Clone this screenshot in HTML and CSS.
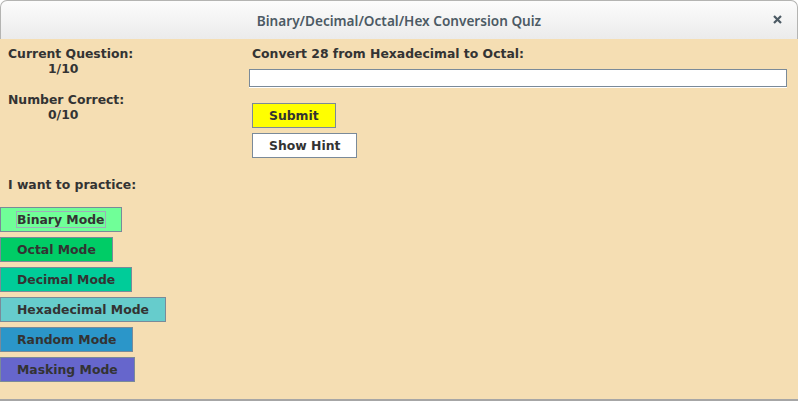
FILE: index.html
```html
<!DOCTYPE html>
<html>
<head>
<meta charset="utf-8">
<link rel="stylesheet" href="styles.css">
</head>
<body>
<div class="window">
  <div class="titlebar">
    <span class="title">Binary/Decimal/Octal/Hex Conversion Quiz</span>
    <svg class="close" width="9" height="9" viewBox="0 0 9 9"><path d="M1 1 L8 8 M8 1 L1 8" stroke="#4c5a64" stroke-width="2.2" stroke-linecap="butt"/></svg>
  </div>
  <div class="content">
    <div class="left">
      <div class="label">Current Question:</div>
      <div class="value">1/10</div>
      <div class="label gap-sm">Number Correct:</div>
      <div class="value">0/10</div>
      <div class="label gap-lg">I want to practice:</div>
      <div class="modes">
        <button class="mode binary"><span class="focus">Binary Mode</span></button>
        <button class="mode octal">Octal Mode</button>
        <button class="mode decimal">Decimal Mode</button>
        <button class="mode hex">Hexadecimal Mode</button>
        <button class="mode random">Random Mode</button>
        <button class="mode masking">Masking Mode</button>
      </div>
    </div>
    <div class="right">
      <div class="label prompt">Convert 28 from Hexadecimal to Octal:</div>
      <div class="field"></div>
      <div class="actions">
        <button class="btn submit">Submit</button>
        <button class="btn hint">Show Hint</button>
      </div>
    </div>
  </div>
  <div class="bottom"></div>
</div>
</body>
</html>
```
FILE: styles.css
```css
* { box-sizing: border-box; }
html, body { margin: 0; padding: 0; background: #ffffff; }
body {
  font-family: "DejaVu Sans", sans-serif;
  width: 798px;
  height: 401px;
  overflow: hidden;
}
.window {
  width: 798px;
  height: 401px;
  display: flex;
  flex-direction: column;
}
.titlebar {
  height: 39px;
  flex: none;
  position: relative;
  display: flex;
  align-items: center;
  justify-content: center;
  border: 1px solid #b4b4b2;
  border-bottom: none;
  border-radius: 7px 7px 0 0;
  background: linear-gradient(#fcfcfc, #ebebeb);
}
.title {
  font-family: "Noto Sans", "DejaVu Sans", sans-serif;
  font-weight: 600;
  font-size: 13.6px;
  color: #4c5a64;
  margin-top: 1px;
}
.close {
  position: absolute;
  right: 15px;
  top: 14px;
}
.content {
  flex: 1;
  background: #f5deb3;
  display: flex;
}
.left {
  width: 249px;
  flex: none;
  padding-top: 7px;
}
.label, .value {
  font-weight: bold;
  font-size: 12.4px;
  line-height: 15px;
  color: #333333;
  white-space: nowrap;
}
.label { padding-left: 8px; }
.value { padding-left: 48px; }
.gap-sm { margin-top: 16px; }
.gap-lg { margin-top: 55px; }
.modes {
  margin-top: 15px;
  display: flex;
  flex-direction: column;
  align-items: flex-start;
  gap: 5px;
}
button {
  font-family: "DejaVu Sans", sans-serif;
  font-weight: bold;
  font-size: 12.4px;
  color: #333333;
  height: 25px;
  border: 1px solid #7a8a99;
  margin: 0;
  padding: 0 16px;
  line-height: 15px;
  border-radius: 0;
}
.focus {
  outline: 1px solid #9fadb9;
  outline-offset: 0px;
  padding: 0;
}
.binary { background: #70ff98; }
.octal { background: #00cc66; }
.decimal { background: #00cc99; }
.hex { background: #66cccc; }
.random { background: #2b96c9; }
.masking { background: #6666cc; }
.right {
  flex: 1;
  padding-top: 7px;
}
.prompt { padding-left: 3px; }
.field {
  margin-top: 8px;
  width: 538px;
  height: 18px;
  background: #ffffff;
  border: 1px solid #7a8a99;
  box-shadow: 0 1px 0 #ffffff;
}
.actions {
  margin-top: 16px;
  padding-left: 3px;
  display: flex;
  flex-direction: column;
  align-items: flex-start;
  gap: 5px;
}
.submit { background: #ffff00; }
.hint { background: #ffffff; }
.bottom {
  height: 2px;
  flex: none;
  background: #a6a6a6;
}
```
